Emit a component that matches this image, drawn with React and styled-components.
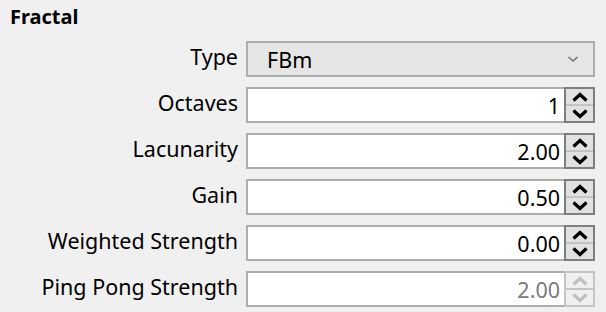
import React from 'react';
import styled, { createGlobalStyle } from 'styled-components';

const GlobalStyle = createGlobalStyle`
  html, body {
    margin: 0;
    padding: 0;
    background: #f0f0f0;
  }
  body {
    font-family: "Noto Sans", "Open Sans", sans-serif;
    color: #000;
  }
`;

const Panel = styled.div`
  width: 606px;
  height: 312px;
  box-sizing: border-box;
  padding: 3px 11px 0 10px;
  background: #f0f0f0;
  overflow: hidden;
`;

const Title = styled.div`
  font-weight: 700;
  font-size: 20px;
  line-height: 28px;
  height: 38px;
`;

const Form = styled.div`
  display: grid;
  grid-template-columns: 228px 349px;
  column-gap: 8px;
  row-gap: 10px;
  align-items: center;
`;

const Label = styled.div`
  text-align: right;
  font-size: 21.5px;
  line-height: 28px;
  white-space: nowrap;
  margin-top: -4px;
`;

const Combo = styled.div`
  height: 36px;
  box-sizing: border-box;
  border: 2px solid #adadad;
  background: #e5e5e5;
  display: flex;
  align-items: center;
  justify-content: space-between;
  padding: 0 14px 0 19px;
  font-size: 21.5px;
`;

const Spin = styled.div`
  height: 36px;
  box-sizing: border-box;
  border: 2px solid #adadad;
  background: #fff;
  display: flex;
  align-items: stretch;
`;

const Value = styled.div`
  flex: 1;
  display: flex;
  align-items: center;
  justify-content: flex-end;
  padding-right: 4px;
  font-size: 21.5px;
  color: ${(p) => (p.disabled ? '#7a7a7a' : '#000')};
`;

const Buttons = styled.div`
  width: 31px;
  box-sizing: border-box;
  border: 2px solid ${(p) => (p.disabled ? '#c4c4c4' : '#7e7e7e')};
  margin: -2px -2px -2px 0;
  display: flex;
  flex-direction: column;
`;

const Step = styled.div`
  flex: 1;
  display: flex;
  align-items: center;
  justify-content: center;
  background: ${(p) => (p.disabled ? '#f0f0f0' : '#e1e1e1')};
  & + & {
    border-top: 2px solid ${(p) => (p.disabled ? '#c4c4c4' : '#7e7e7e')};
  }
`;

const Chevron = ({ up, color }) => (
  <svg width="18" height="10" viewBox="0 0 18 10">
    <path
      d={up ? 'M2.5 8.5 L9 2.5 L15.5 8.5' : 'M2.5 1.5 L9 7.5 L15.5 1.5'}
      fill="none"
      stroke={color}
      strokeWidth="3.2"
    />
  </svg>
);

const SpinBox = ({ value, disabled }) => {
  const c = disabled ? '#c0c0c0' : '#000';
  return (
    <Spin>
      <Value disabled={disabled}>{value}</Value>
      <Buttons disabled={disabled}>
        <Step disabled={disabled}>
          <Chevron up color={c} />
        </Step>
        <Step disabled={disabled}>
          <Chevron color={c} />
        </Step>
      </Buttons>
    </Spin>
  );
};

const rows = [
  { label: 'Octaves', value: '1' },
  { label: 'Lacunarity', value: '2.00' },
  { label: 'Gain', value: '0.50' },
  { label: 'Weighted Strength', value: '0.00' },
  { label: 'Ping Pong Strength', value: '2.00', disabled: true },
];

export default function App() {
  return (
    <>
      <GlobalStyle />
      <Panel>
        <Title>Fractal</Title>
        <Form>
          <Label>Type</Label>
          <Combo>
            <span>FBm</span>
            <svg width="12" height="8" viewBox="0 0 12 8">
              <path d="M1.5 2 L6 6 L10.5 2" fill="none" stroke="#777" strokeWidth="1.6" />
            </svg>
          </Combo>
          {rows.map((r) => (
            <React.Fragment key={r.label}>
              <Label>{r.label}</Label>
              <SpinBox value={r.value} disabled={r.disabled} />
            </React.Fragment>
          ))}
        </Form>
      </Panel>
    </>
  );
}
